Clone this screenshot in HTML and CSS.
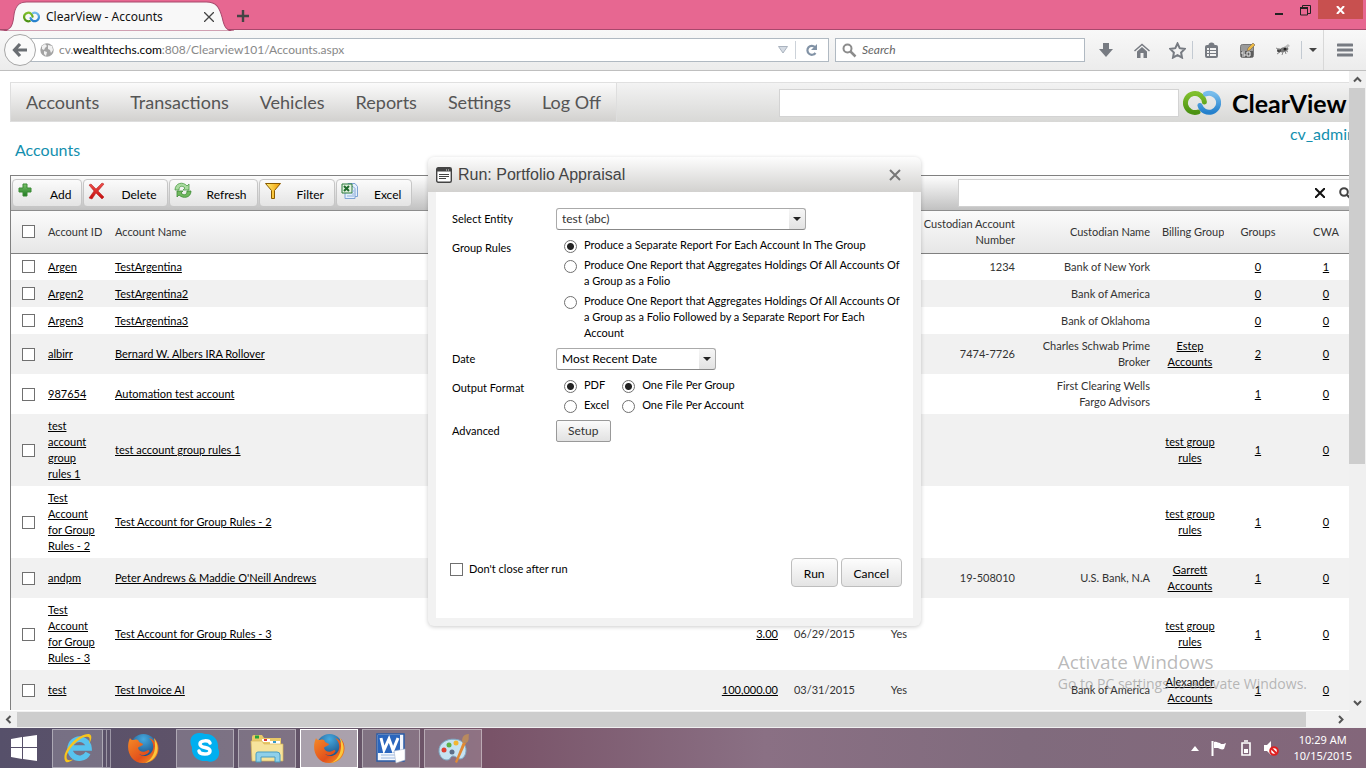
FILE: index.html
```html
<!DOCTYPE html>
<html lang="en">
<head>
  <meta charset="UTF-8">
  <meta name="viewport" content="width=device-width, initial-scale=1.0">
  <title>ClearView - Accounts</title>
  <link rel="stylesheet" href="styles.css">
</head>
<body>

  <!-- shared icons -->
  <svg class="defs" aria-hidden="true">
    <defs>
      <linearGradient id="gGreen" x1="0" y1="0" x2="0" y2="1"><stop offset="0" stop-color="#7fbf2c"/><stop offset="1" stop-color="#4b9112"/></linearGradient>
      <linearGradient id="gBlue" x1="0" y1="0" x2="0" y2="1"><stop offset="0" stop-color="#78bdec"/><stop offset="1" stop-color="#2480cc"/></linearGradient>
      <linearGradient id="gFox" x1="0" y1="0" x2="1" y2="1"><stop offset="0" stop-color="#f58a26"/><stop offset=".6" stop-color="#e2501c"/><stop offset="1" stop-color="#f7a323"/></linearGradient>
      <radialGradient id="gGlobe" cx=".5" cy=".2" r=".8"><stop offset="0" stop-color="#45a9df"/><stop offset="1" stop-color="#143f76"/></radialGradient>
      <linearGradient id="gFunnel"><stop offset="0" stop-color="#fff27a"/><stop offset="1" stop-color="#f39a00"/></linearGradient>
      <linearGradient id="gPlus" x1="0" y1="0" x2="0" y2="1"><stop offset="0" stop-color="#7cc46c"/><stop offset="1" stop-color="#1f7a22"/></linearGradient>
      <linearGradient id="gCross" x1="0" y1="0" x2="0" y2="1"><stop offset="0" stop-color="#f0504c"/><stop offset="1" stop-color="#c40d0d"/></linearGradient>
      <symbol id="logo" viewBox="0 0 38 26">
        <path d="M15 22a9.500 9.500 0 1 1 6.400-10" fill="none" stroke="url(#gGreen)" stroke-width="5" stroke-linecap="round"/>
        <path d="M22.500 4a9.500 9.500 0 1 1-5.500 11.500" fill="none" stroke="url(#gBlue)" stroke-width="5" stroke-linecap="round"/>
      </symbol>
      <symbol id="firefox" viewBox="0 0 32 32">
        <circle cx="16.500" cy="15" r="13" fill="url(#gGlobe)"/>
        <path d="M3 6c1 2 2 2 4 2 3-1 5 0 5 2l4 2c0 2-4 2-5 4 1 4 6 5 10 2 1 0 2 1 1 2-3 4-8 4-11 1 4 5 13 4 15-4 1-5-1-8-4-11 4 1 6 4 7 7 0-2 0-4-2-7 8 6 6 25-11 25C3 31-2 17 3 6z" fill="url(#gFox)"/>
        <path d="M27 6c8 10 2 23-9 25 8-4 12-13 9-25z" fill="#fbc83c"/>
      </symbol>
    </defs>
  </svg>

  <div class="screen">

    <!-- window title bar -->
    <header class="titlebar">
      <div class="tab">
        <svg class="tab-shape" viewBox="0 0 238 30" preserveAspectRatio="none"><path d="M0 30C11 30 13 25 14 16 15 6 19 2 27 2H210C220 2 223 7 226 17 228 26 230 30 238 30Z" fill="#f8f8f8" stroke="#a8486c"/></svg>
        <svg class="tab-logo"><use href="#logo"/></svg>
        <span class="tab-title">ClearView - Accounts</span>
        <button class="tab-close" aria-label="Close tab"><svg width="10" height="10"><path d="M0 0l10 10M10 0L0 10" stroke="#444" stroke-width="1.300"/></svg></button>
      </div>
      <button class="tab-new" aria-label="New tab"><svg width="12" height="12"><path d="M6 0v12M0 6h12" stroke="#444" stroke-width="2.400"/></svg></button>
      <div class="win-buttons">
        <button class="win-btn" aria-label="Minimize"><svg width="10" height="12"><path d="M1 10h8" stroke="#222" stroke-width="2"/></svg></button>
        <button class="win-btn" aria-label="Restore"><svg width="11" height="12"><path d="M.5 4h7v7h-7zM2.500 3V1.500h8v8H8" fill="none" stroke="#222"/><path d="M0 4h8" stroke="#222" stroke-width="2"/></svg></button>
        <button class="win-btn win-close" aria-label="Close"><svg width="9" height="8"><path d="M1 0l7 8M8 0L1 8" stroke="#fff" stroke-width="2"/></svg></button>
      </div>
    </header>

    <!-- browser toolbar -->
    <div class="browser-bar">
      <button class="back" aria-label="Back"><svg width="16" height="16"><path d="M8 2L2.500 8 8 14M3 8h12" fill="none" stroke="#6a6e73" stroke-width="3.200"/></svg></button>
      <div class="url">
        <svg width="14" height="14" viewBox="0 0 14 14"><circle cx="7" cy="7" r="6.700" fill="#a3a3a3"/><path d="M2 3l3-2 2 2-2 2-1 2-2-1zM8 2l4 1 1 4-2 3-1-3-2-1zM4 8l3 1-1 4-2-2z" fill="#f1f1f1"/></svg>
        <span class="url-text">cv.<b>wealthtechs.com</b>:808/Clearview101/Accounts.aspx</span>
        <svg width="10" height="8"><path d="M.5 .5h9L5 7z" fill="#d5dbe3" stroke="#aab3bf"/></svg>
        <button class="reload" aria-label="Reload"><svg width="14" height="14"><path d="M10.500 10A4.500 4.500 0 1 1 10 4" fill="none" stroke="#8293a6" stroke-width="2.200"/><path d="M12 1v6H6z" fill="#8293a6"/></svg></button>
      </div>
      <div class="search">
        <svg width="15" height="15"><circle cx="5.500" cy="5.500" r="4" fill="none" stroke="#8c8c8c" stroke-width="2"/><path d="M8.500 8.500l5 5" stroke="#8c8c8c" stroke-width="2.500"/></svg>
        <input type="text" placeholder="Search" aria-label="Search the web">
      </div>
      <div class="tools">
        <button class="tool" aria-label="Downloads"><svg width="16" height="18"><path d="M5 2h6v6h4l-7 8-7-8h4z" fill="#777b82"/></svg></button>
        <button class="tool" aria-label="Home"><svg width="18" height="17"><path d="M1.500 9L9 2.500 16.500 9" fill="none" stroke="#777b82" stroke-width="1.500"/><path d="M4 9.500L9 5l5 4.500V16h-3.500v-5h-3v5H4z" fill="#777b82"/></svg></button>
        <button class="tool tool-sep" aria-label="Bookmark"><svg width="17" height="17"><path d="M8.500 1.500l2.200 4.700 5 .7-3.600 3.600.9 5.100-4.500-2.400L4 15.600l.9-5.100L1.300 6.900l5-.7z" fill="none" stroke="#777b82" stroke-width="2"/></svg></button>
        <button class="tool" aria-label="Bookmarks list"><svg width="15" height="17"><rect x="1" y="3" width="13" height="13" rx="2" fill="#777b82"/><path d="M4.500 3q0-2.500 3-2.500t3 2.500z" fill="#777b82"/><path d="M3 6h2v2H3zM6 6h6v2H6zM3 9h2v2H3zM6 9h6v2H6zM3 12h2v2H3zM6 12h6v2H6z" fill="#f2f2f2"/></svg></button>
        <button class="tool" aria-label="SQL add-on"><svg width="17" height="17"><rect x="1.500" y="2.500" width="13" height="13" rx="2" fill="#9a9a9a" stroke="#777"/><path d="M2 9h12v6H2z" fill="#5c5c5c"/><path d="M6 10H3v2h3v2H3M8 10h3v4H8z" fill="none" stroke="#eee"/><path d="M8 9l1-3 5-5 2 2-5 5z" fill="#edbb46" stroke="#765" stroke-width=".6"/></svg></button>
        <button class="tool" aria-label="Firebug"><svg width="16" height="14"><ellipse cx="9" cy="6.500" rx="4.500" ry="2.500" transform="rotate(-20 9 6.500)" fill="#777"/><circle cx="4" cy="7.500" r="2" fill="#444"/><path d="M1 5l4 2M2 11l3-2M7 12l1-3M11 11l-1-3M13 9l-3-2" stroke="#888"/><path d="M8 5l5-4 2 2-5 3z" fill="#bbb"/><circle cx="10" cy="6" r="1.500" fill="#222"/></svg></button>
        <button class="tool tool-drop" aria-label="More"><svg width="8" height="4"><path d="M0 0h8L4 4z" fill="#444"/></svg></button>
        <button class="tool tool-menu" aria-label="Menu"><svg width="16" height="14"><path d="M1 2h14M1 7h14M1 12h14" stroke="#777b82" stroke-width="3" stroke-linecap="round"/></svg></button>
      </div>
    </div>

    <!-- web page -->
    <div class="viewport">
      <div class="page">
        <div class="content">

          <div class="site-head">
            <nav class="menu">
              <a href="#">Accounts</a>
              <a href="#">Transactions</a>
              <a href="#">Vehicles</a>
              <a href="#">Reports</a>
              <a href="#">Settings</a>
              <a href="#">Log Off</a>
            </nav>
            <div class="brand">
              <input class="site-search" type="text" aria-label="Search site">
              <svg class="brand-logo"><use href="#logo"/></svg>
              <span class="brand-name">ClearView</span>
            </div>
          </div>
          <div class="user"><a href="#">cv_admin</a></div>
          <h1>Accounts</h1>

          <div class="grid">
            <div class="grid-bar">
              <button class="gbtn"><svg width="18" height="18"><path d="M6 2h4v4h4v4h-4v4H6v-4H2V6h4z" fill="url(#gPlus)" stroke="#3b8a35"/></svg>Add</button>
              <button class="gbtn"><svg width="18" height="18"><path d="M1 3l2-1 5 5 6-6 2 1-6 7 6 6-2 2-6-6-4 6-3-1 5-7z" fill="url(#gCross)" stroke="#b01515" stroke-width=".5"/></svg>Delete</button>
              <button class="gbtn"><svg width="18" height="18"><path d="M1 8C1 1 9-1 13 4l2-2v6H9l2-2C8 3 5 4 5 8z" fill="#a9dba0" stroke="#4d9a45" stroke-width=".8"/><path d="M17 9c0 7-8 8-12 4l-2 2V9h6l-2 2c3 3 6 2 6-2z" fill="#6fb85e" stroke="#3e8c35" stroke-width=".8"/></svg>Refresh</button>
              <button class="gbtn"><svg width="18" height="18"><path d="M1.500 1.500h15l-6 7v8h-3v-8z" fill="url(#gFunnel)" stroke="#8a5a00"/></svg>Filter</button>
              <button class="gbtn"><svg width="18" height="18"><path d="M7 1.500h7l2.500 3v10H7z" fill="#e4effc" stroke="#7fa3d4"/><path d="M4 4.500h8l2 2v10H4z" fill="#e4effc" stroke="#7fa3d4"/><path d="M1 2h10v9H1z" fill="#e4f2e2" stroke="#2b7a3a"/><path d="M3 4l5 5M8 4L3 9" stroke="#1e6b2c" stroke-width="2"/><path d="M11 9h2m-2 3h2m-7 2h7" stroke="#8fb0dc"/></svg>Excel</button>
              <div class="grid-search">
                <input type="text" aria-label="Search accounts">
                <button aria-label="Clear"><svg width="10" height="10"><path d="M0 0l10 10M10 0L0 10" stroke="#111" stroke-width="2"/></svg></button>
                <button aria-label="Find"><svg width="13" height="13"><circle cx="5" cy="5" r="3.800" fill="none" stroke="#444" stroke-width="2"/><path d="M8 8l4 4" stroke="#444" stroke-width="2"/></svg></button>
              </div>
            </div>

            <table class="accounts">
              <colgroup>
                <col class="c-check"><col class="c-id"><col class="c-name"><col class="c-value"><col class="c-date"><col class="c-active">
                <col class="c-custno"><col class="c-cust"><col class="c-count"><col class="c-count"><col class="c-count">
              </colgroup>
              <thead>
                <tr>
                  <th class="check"><input type="checkbox" aria-label="Select all"></th>
                  <th class="left">Account ID</th>
                  <th class="left">Account Name</th>
                  <th></th><th></th><th></th>
                  <th class="right">Custodian Account Number</th>
                  <th class="right">Custodian Name</th>
                  <th class="clip">Billing Group</th>
                  <th>Groups</th>
                  <th>CWA</th>
                </tr>
              </thead>
              <tbody>
                <tr>
                  <td class="check"><input type="checkbox" aria-label="Argen"></td>
                  <td class="left"><a href="#">Argen</a></td>
                  <td class="left"><a href="#">TestArgentina</a></td>
                  <td></td><td></td><td></td>
                  <td class="right">1234</td>
                  <td class="right">Bank of New York</td>
                  <td></td>
                  <td><a href="#">0</a></td>
                  <td><a href="#">1</a></td>
                </tr>
                <tr>
                  <td class="check"><input type="checkbox" aria-label="Argen2"></td>
                  <td class="left"><a href="#">Argen2</a></td>
                  <td class="left"><a href="#">TestArgentina2</a></td>
                  <td></td><td></td><td></td>
                  <td></td>
                  <td class="right">Bank of America</td>
                  <td></td>
                  <td><a href="#">0</a></td>
                  <td><a href="#">0</a></td>
                </tr>
                <tr>
                  <td class="check"><input type="checkbox" aria-label="Argen3"></td>
                  <td class="left"><a href="#">Argen3</a></td>
                  <td class="left"><a href="#">TestArgentina3</a></td>
                  <td></td><td></td><td></td>
                  <td></td>
                  <td class="right">Bank of Oklahoma</td>
                  <td></td>
                  <td><a href="#">0</a></td>
                  <td><a href="#">0</a></td>
                </tr>
                <tr>
                  <td class="check"><input type="checkbox" aria-label="albirr"></td>
                  <td class="left"><a href="#">albirr</a></td>
                  <td class="left"><a href="#">Bernard W. Albers IRA Rollover</a></td>
                  <td></td><td></td><td></td>
                  <td class="right">7474-7726</td>
                  <td class="right">Charles Schwab Prime Broker</td>
                  <td><a href="#">Estep Accounts</a></td>
                  <td><a href="#">2</a></td>
                  <td><a href="#">0</a></td>
                </tr>
                <tr>
                  <td class="check"><input type="checkbox" aria-label="987654"></td>
                  <td class="left"><a href="#">987654</a></td>
                  <td class="left"><a href="#">Automation test account</a></td>
                  <td></td><td></td><td></td>
                  <td></td>
                  <td class="right">First Clearing Wells Fargo Advisors</td>
                  <td></td>
                  <td><a href="#">1</a></td>
                  <td><a href="#">0</a></td>
                </tr>
                <tr>
                  <td class="check"><input type="checkbox" aria-label="test account group rules 1"></td>
                  <td class="left"><a href="#">test account group rules 1</a></td>
                  <td class="left"><a href="#">test account group rules 1</a></td>
                  <td></td><td></td><td></td>
                  <td></td>
                  <td></td>
                  <td><a href="#">test group rules</a></td>
                  <td><a href="#">1</a></td>
                  <td><a href="#">0</a></td>
                </tr>
                <tr>
                  <td class="check"><input type="checkbox" aria-label="Test Account for Group Rules - 2"></td>
                  <td class="left"><a href="#">Test Account for Group Rules - 2</a></td>
                  <td class="left"><a href="#">Test Account for Group Rules - 2</a></td>
                  <td></td><td></td><td></td>
                  <td></td>
                  <td></td>
                  <td><a href="#">test group rules</a></td>
                  <td><a href="#">1</a></td>
                  <td><a href="#">0</a></td>
                </tr>
                <tr>
                  <td class="check"><input type="checkbox" aria-label="andpm"></td>
                  <td class="left"><a href="#">andpm</a></td>
                  <td class="left"><a href="#">Peter Andrews &amp; Maddie O'Neill Andrews</a></td>
                  <td></td><td></td><td></td>
                  <td class="right">19-508010</td>
                  <td class="right">U.S. Bank, N.A</td>
                  <td><a href="#">Garrett Accounts</a></td>
                  <td><a href="#">1</a></td>
                  <td><a href="#">0</a></td>
                </tr>
                <tr>
                  <td class="check"><input type="checkbox" aria-label="Test Account for Group Rules - 3"></td>
                  <td class="left"><a href="#">Test Account for Group Rules - 3</a></td>
                  <td class="left"><a href="#">Test Account for Group Rules - 3</a></td>
                  <td class="right"><a href="#">3.00</a></td>
                  <td class="right">06/29/2015</td>
                  <td class="right">Yes</td>
                  <td></td>
                  <td></td>
                  <td><a href="#">test group rules</a></td>
                  <td><a href="#">1</a></td>
                  <td><a href="#">0</a></td>
                </tr>
                <tr>
                  <td class="check"><input type="checkbox" aria-label="test"></td>
                  <td class="left"><a href="#">test</a></td>
                  <td class="left"><a href="#">Test Invoice AI</a></td>
                  <td class="right"><a href="#">100,000.00</a></td>
                  <td class="right">03/31/2015</td>
                  <td class="right">Yes</td>
                  <td></td>
                  <td class="right">Bank of America</td>
                  <td><a href="#">Alexander Accounts</a></td>
                  <td><a href="#">1</a></td>
                  <td><a href="#">0</a></td>
                </tr>
              </tbody>
            </table>
          </div>
        </div>

        <!-- report dialog -->
        <div class="overlay">
          <form class="dialog" role="dialog" aria-labelledby="dlgTitle">
            <div class="dialog-head">
              <svg width="16" height="16"><rect x=".7" y=".7" width="14.600" height="14.600" rx="1.500" fill="#fff" stroke="#444" stroke-width="1.400"/><path d="M1 1h14v3.500H1z" fill="#444"/><path d="M10 3h1m1 0h1" stroke="#ddd"/><path d="M3 7.500h10M3 9.500h10M3 11.500h7" stroke="#444"/></svg>
              <h2 id="dlgTitle">Run: Portfolio Appraisal</h2>
              <button type="button" aria-label="Close dialog"><svg width="12" height="12"><path d="M1 1l10 10M11 1L1 11" stroke="#777" stroke-width="2"/></svg></button>
            </div>
            <div class="dialog-body">
              <div class="fields">
                <label for="entity">Select Entity</label>
                <div class="drop drop-wide">
                  <select id="entity"><option>test (abc)</option></select>
                </div>

                <span id="rulesLabel">Group Rules</span>
                <div class="options" role="radiogroup" aria-labelledby="rulesLabel">
                  <label><input type="radio" name="rules" checked><span>Produce a Separate Report For Each Account In The Group</span></label>
                  <label><input type="radio" name="rules"><span>Produce One Report that Aggregates Holdings Of All Accounts Of a Group as a Folio</span></label>
                  <label><input type="radio" name="rules"><span>Produce One Report that Aggregates Holdings Of All Accounts Of a Group as a Folio Followed by a Separate Report For Each Account</span></label>
                </div>

                <label for="date">Date</label>
                <div class="drop drop-date">
                  <select id="date"><option>Most Recent Date</option></select>
                </div>

                <span>Output Format</span>
                <div class="formats">
                  <div class="options">
                    <label><input type="radio" name="format" checked><span>PDF</span></label>
                    <label><input type="radio" name="format"><span>Excel</span></label>
                  </div>
                  <div class="options">
                    <label><input type="radio" name="files" checked><span>One File Per Group</span></label>
                    <label><input type="radio" name="files"><span>One File Per Account</span></label>
                  </div>
                </div>

                <span>Advanced</span>
                <button type="button" class="setup">Setup</button>
              </div>
              <div class="dialog-foot">
                <label class="keep"><input type="checkbox">Don't close after run</label>
                <button type="button" class="action">Run</button>
                <button type="button" class="action">Cancel</button>
              </div>
            </div>
          </form>
        </div>
      </div>

      <!-- scrollbars -->
      <div class="vscroll">
        <svg class="arrow"><path d="M5 10.500l3.500-3.500 3.500 3.500" fill="none" stroke="#555" stroke-width="2"/></svg>
        <div class="track"><div class="thumb"></div></div>
        <svg class="arrow"><path d="M5 7l3.500 3.500L12 7" fill="none" stroke="#555" stroke-width="2"/></svg>
      </div>
      <div class="hscroll">
        <svg class="arrow"><path d="M10.500 5L7 8.500l3.500 3.500" fill="none" stroke="#555" stroke-width="2"/></svg>
        <div class="track"><div class="thumb"></div></div>
        <svg class="arrow"><path d="M7 5l3.500 3.500L7 12" fill="none" stroke="#555" stroke-width="2"/></svg>
      </div>
    </div>

    <!-- taskbar -->
    <footer class="taskbar">
      <button class="start" aria-label="Start"><svg width="28" height="28"><path d="M1 5l11-2v10H1zM13 3l14-2v12H13zM1 14h11v11L1 23zM13 14h14v13l-14-2z" fill="#fff"/></svg></button>
      <div class="stack">
        <button class="task" aria-label="Internet Explorer"><svg width="32" height="32"><path d="M26 21a9.500 9.500 0 1 1 1-5H9" fill="none" stroke="#58c3ee" stroke-width="5.500"/><path d="M4 30C-3 22 15 1 27 2c4 1 2 7 0 10 1-4 1-7-1-7C18 3 2 21 5 27c1 2 5 1 7 0-3 2-6 4-8 3z" fill="#f8c51c"/></svg></button>
        <i></i>
        <i></i>
      </div>
      <button class="task task-plain" aria-label="Firefox"><svg width="32" height="32"><use href="#firefox"/></svg></button>
      <button class="task" aria-label="Skype"><svg width="32" height="32"><path d="M10 1a13 13 0 0 1 6 1c8-1 14 6 13 14 4 8-3 16-11 13C9 30 2 24 3 15-1 8 3 1 10 1z" fill="#00aff0"/><path d="M21 11c-1-3-10-3-10 1 0 5 10 2 10 7 0 4-10 4-11 0" fill="none" stroke="#fff" stroke-width="3.500" stroke-linecap="round"/></svg></button>
      <button class="task" aria-label="File Explorer"><svg width="34" height="32"><path d="M2 5q0-2 2-2h8l2 3h17v23H2z" fill="#e9c968"/><path d="M5 5h4" stroke="#24a33a" stroke-width="3"/><path d="M12 7h8v3h-8zM20 9h10v3H20z" fill="#fff"/><path d="M14 8h3" stroke="#d33" stroke-width="2"/><path d="M23 10h3" stroke="#39c" stroke-width="2"/><path d="M1 9h11l2 3h19v17H2z" fill="#f6e39c" stroke="#d8b65a" stroke-width=".7"/><path d="M6 30V22q0-2 2-2h19q3 0 3 3v7h-5v-5H11v5z" fill="#8fd0ea" stroke="#4b9cc0"/></svg></button>
      <button class="task task-active" aria-label="Firefox window"><svg width="32" height="32"><use href="#firefox"/></svg></button>
      <button class="task" aria-label="Word"><svg width="32" height="32"><path d="M2 2h27v27H2z" fill="#f3f7fd" stroke="#2a5ca8" stroke-width="1.500"/><path d="M3 3h22v18H3z" fill="#2b66bd"/><path d="M6 6l3 12 5-11 4 11 5-12" fill="none" stroke="#fff" stroke-width="3"/><path d="M6 23h14M6 26h14" stroke="#9db8de"/><path d="M19 19l11-2v11l-9 3z" fill="#fff" stroke="#a8b6cc" stroke-width=".6"/></svg></button>
      <button class="task" aria-label="Paint"><svg width="32" height="32"><path d="M2 20C1 10 12 5 22 8c8 3 9 13 4 18-5 3-6-2-10-2-3 0-2 4-6 4-4 0-7-3-8-8z" fill="#c6e3f2" stroke="#7ea9c4"/><circle cx="7" cy="18" r="2.500" fill="#dd4133"/><circle cx="12" cy="13" r="2.500" fill="#5cb047"/><circle cx="19" cy="11" r="2.500" fill="#f2b632"/><circle cx="15" cy="20" r="2.500" fill="#5c6f88"/><path d="M18 30l8-20 3 1-9 20z" fill="#e08a35"/><path d="M25 10c0-4 1-8 7-8-1 3 1 7-3 9z" fill="#b98a5e"/></svg></button>
      <div class="tray">
        <svg width="8" height="5"><path d="M4 0l4 5H0z" fill="#fff"/></svg>
        <svg class="flag" width="16" height="16"><path d="M1.500 1v15" stroke="#fff" stroke-width="2"/><path d="M3 2c3-1 4 1 6 1l1 1c2 0 3 0 5-1l-2 6c-2 1-4 0-6-1H3z" fill="#fff"/></svg>
        <svg width="10" height="16"><path d="M1 3h8v12H1zM3 1h4" fill="none" stroke="#fff" stroke-width="1.600"/><path d="M3 9h4v4H3z" fill="#fff"/></svg>
        <svg width="16" height="16"><path d="M1 5h3l4-4v14l-4-4H1z" fill="#fff"/><circle cx="11" cy="11" r="3.800" fill="#fff" stroke="#e02020" stroke-width="2"/><path d="M8.500 8.500l5 5" stroke="#e02020" stroke-width="2"/></svg>
        <div class="clock"><span>10:29 AM</span><span>10/15/2015</span></div>
      </div>
    </footer>

    <div class="watermark">
      <p class="wm-title">Activate Windows</p>
      <p class="wm-text">Go to PC settings to activate Windows.</p>
    </div>
  </div>

</body>
</html>
```
FILE: styles.css
```css
* { box-sizing: border-box; }
body {
  margin: 0;
  font-family: Lato, "Liberation Sans", sans-serif;
  font-size: 11px;
  line-height: 16px;
  color: #333;
}
button {
  font: inherit;
  color: inherit;
  padding: 0;
  border: none;
  background: none;
}
input, select { font: inherit; margin: 0; }
svg { display: block; flex: none; }
.defs { position: absolute; width: 0; height: 0; }

.screen {
  display: flex;
  flex-direction: column;
  height: 100vh;
  overflow: hidden;
}

/* Title bar */
.titlebar {
  display: flex;
  height: 30px;
  flex: none;
  background: #e76791;
  border-bottom: 1px solid #a8486c;
}
.tab {
  position: relative;
  display: flex;
  align-items: center;
  width: 234px;
  height: 31px;
  padding: 2px 20px 0 23px;
  font: 12px "Noto Sans", "Open Sans", sans-serif;
  color: #111;
}
.tab > * { position: relative; }
.tab .tab-shape {
  position: absolute;
  left: 0;
  top: 0;
  width: 100%;
  height: 100%;
}
.tab-logo { width: 17px; height: 12px; }
.tab-title { flex: 1; padding-left: 6px; white-space: nowrap; }
.tab-new { padding: 2px 3px 0; }
.win-buttons { display: flex; margin-left: auto; padding-right: 3px; }
.win-btn {
  display: flex;
  align-items: center;
  justify-content: center;
  width: 26px;
  height: 19px;
}
.win-close { width: 45px; background: #c8504f; }

/* Browser toolbar */
.browser-bar {
  display: flex;
  align-items: center;
  height: 41px;
  flex: none;
  padding-left: 4px;
  background: linear-gradient(#f8f8f8, #ececec);
  border-bottom: 1px solid #bfbfbf;
  font-size: 12px;
}
.back {
  display: flex;
  align-items: center;
  justify-content: center;
  width: 32px;
  height: 32px;
  border: 1px solid #a6a6a6;
  border-radius: 50%;
  background: #fafafa;
  z-index: 1;
}
.url, .search {
  display: flex;
  align-items: center;
  height: 24px;
  background: #fff;
  border: 1px solid #b0b9c2;
}
.url {
  flex: 1;
  margin: 0 6px 0 -8px;
  padding-left: 11px;
  gap: 5px;
  color: #888;
}
.url-text { flex: 1; white-space: nowrap; }
.url-text b { font-weight: normal; color: #000; }
.reload {
  display: flex;
  align-items: center;
  height: 18px;
  padding: 0 9px;
  margin-left: 2px;
  border-left: 1px solid #ccd2d9;
}
.search { width: 250px; padding: 0 6px; gap: 5px; }
.search input {
  flex: 1;
  min-width: 0;
  border: none;
  padding: 0;
  font-style: italic;
}
.search input::placeholder { color: #666; }
.tools { display: flex; align-items: center; padding-left: 3px; }
.tool {
  display: flex;
  align-items: center;
  justify-content: center;
  width: 36px;
  height: 18px;
}
.tool-sep { width: 33px; padding-left: 3px; border-right: 1px solid #c3cad2; }
.tool-drop { width: 22px; border-left: 1px solid #c3cad2; }
.tool-menu { width: 43px; height: 40px; border-left: 1px solid #d8d8d8; }

/* Browser viewport and scrollbars */
.viewport {
  flex: 1;
  min-height: 0;
  display: grid;
  grid-template-columns: 1fr 17px;
  grid-template-rows: 1fr 17px;
  background: #f0f0f0;
}
.page {
  position: relative;
  overflow: hidden;
  min-width: 0;
  min-height: 0;
  background: #fff;
}
.vscroll { display: flex; flex-direction: column; }
.hscroll { display: flex; grid-column: 1 / 3; padding-right: 17px; }
.arrow { width: 17px; height: 17px; }
.track { flex: 1; }
.thumb { background: #cdcdcd; }
.vscroll .thumb { height: 62%; margin-right: 1px; }
.hscroll .thumb { width: 98%; height: 15px; margin-top: 1px; }

/* Site header */
.content {
  width: 102%;
  padding: 11px 15px 0 10px;
}
.site-head {
  display: flex;
  align-items: center;
  height: 40px;
  background: linear-gradient(#f3f3f3, #d8d8d6);
  border-top: 1px solid #e0e0e0;
}
.menu {
  display: flex;
  align-items: center;
  align-self: stretch;
  gap: 31px;
  padding: 0 15px;
  background: linear-gradient(#fbfbfb, #d2d1cf);
  border: 1px solid #dedede;
  border-top: none;
  font-size: 18px;
}
.menu a { color: #555; text-decoration: none; white-space: nowrap; }
.brand { display: flex; align-items: center; margin-left: auto; }
.site-search {
  width: 400px;
  height: 28px;
  border: 1px solid #d3d3d3;
}
.brand-logo { width: 38px; height: 26px; margin: 0 11px 0 4px; }
.brand-name {
  width: 129px;
  font: bold 25px Lato, sans-serif;
  color: #000;
}
.user {
  padding: 3px 5px 0 0;
  text-align: right;
  font-size: 16px;
  line-height: 18px;
}
.user a, h1 { color: #138fae; text-decoration: none; }
h1 {
  margin: 0 0 18px 5px;
  font-size: 16px;
  font-weight: normal;
  line-height: 14px;
}

/* Accounts grid */
.grid { border: 1px solid #808080; border-bottom: none; }
.grid-bar {
  display: flex;
  align-items: center;
  gap: 1px;
  height: 35px;
  padding-left: 1px;
  background: linear-gradient(#fdfdfd, #c1c1c1);
  border-bottom: 1px solid #8d8d8d;
}
.gbtn {
  display: flex;
  align-items: center;
  gap: 15px;
  height: 28px;
  padding: 3px 10px 0 4px;
  background: linear-gradient(#fbfbfb, #e4e4e4);
  border: 1px solid #c6c6c6;
  border-radius: 4px;
  font-size: 12px;
  color: #000;
}
.gbtn svg { margin-top: -8px; }
.grid-search {
  display: flex;
  align-items: center;
  width: 402px;
  height: 28px;
  margin-left: auto;
  padding-right: 7px;
  gap: 14px;
  background: #fff;
  border: 1px solid #d0d0d0;
}
.grid-search input { flex: 1; min-width: 0; border: none; }
.accounts {
  width: 100%;
  table-layout: fixed;
  border-collapse: collapse;
}
.c-check { width: 31px; }
.c-id { width: 67px; }
.c-value { width: 84px; }
.c-date { width: 75px; }
.c-active { width: 54px; }
.c-custno { width: 108px; }
.c-cust { width: 135px; }
.c-count { width: 68px; }
th, td {
  height: 27px;
  padding: 4px 6px;
  text-align: center;
  font-weight: normal;
}
th { height: 42px; }
thead tr { background: linear-gradient(#fbfbfb, #e6e6e6); }
thead { border-bottom: 1px solid #808080; }
tbody tr:nth-child(even) { background: #f1f1f1; }
td a { color: #000; }
.check { padding: 4px 0 4px 11px; }
.left { text-align: left; }
td.left { padding-right: 10px; }
.right { text-align: right; }
td.right { padding-left: 10px; }
.clip { overflow: hidden; white-space: nowrap; }
th.clip { padding-right: 0; }
input[type="checkbox"], input[type="radio"] {
  appearance: none;
  display: block;
  flex: none;
  width: 13px;
  height: 13px;
  background: #fff;
  border: 1px solid #707070;
}
input[type="radio"] { border-radius: 50%; }
input[type="radio"]:checked { background: radial-gradient(circle, #222 0 3px, #fff 4px); }

/* Dialog */
.overlay {
  position: absolute;
  inset: 0;
  display: flex;
  align-items: center;
  justify-content: center;
}
.dialog {
  width: 493px;
  padding: 0 8px 8px;
  background: #f2f2f2;
  border-radius: 6px;
  box-shadow: 0 1px 4px rgba(0,0,0,0.2);
  color: #000;
}
.dialog-head {
  display: flex;
  align-items: center;
  gap: 6px;
  height: 35px;
  margin: 0 -8px;
  padding: 2px 20px 0 8px;
  border-radius: 6px 6px 0 0;
  background: linear-gradient(#fdfdfd, #d2d1cf);
}
.dialog-head h2 {
  flex: 1;
  margin: 0;
  font: 16px "Liberation Sans", Arial, sans-serif;
  color: #444;
}
.dialog-body {
  min-height: 426px;
  padding: 16px 11px 31px 16px;
  background: #fff;
  display: flex;
  flex-direction: column;
}
.fields {
  display: grid;
  grid-template-columns: 104px 1fr;
  gap: 7px 0;
}
.fields > span, .fields > label { line-height: 22px; }
.drop { position: relative; height: 22px; }
.drop-wide { width: 250px; }
.drop-date { width: 160px; }
.drop select {
  appearance: none;
  width: 100%;
  height: 22px;
  padding: 1px 20px 0 5px;
  border: 1px solid #aaa;
  border-bottom-color: #888;
  border-radius: 3px;
  background: linear-gradient(#f6f6f6, #e2e2e2) right / 16px 100% no-repeat #fff;
  font-size: 12px;
  color: #000;
}
.drop-wide select { color: #333; }
.drop::after {
  content: "";
  position: absolute;
  right: 5px;
  top: 9px;
  border: 4px solid transparent;
  border-top-color: #222;
  border-bottom: none;
}
.options {
  display: flex;
  flex-direction: column;
  gap: 4px;
  padding-left: 8px;
}
.options label { display: flex; gap: 7px; }
.options input { margin-top: 3px; }
.formats { display: flex; gap: 5px; }
.setup {
  justify-self: start;
  height: 22px;
  padding: 1px 11px 0;
  border: 1px solid #999;
  border-radius: 2px;
  background: linear-gradient(#fbfbfb, #e2e2e2);
  font-size: 12px;
  color: #333;
}
.dialog-foot {
  display: flex;
  align-items: center;
  gap: 3px;
  margin-top: auto;
}
.keep {
  display: flex;
  align-items: center;
  gap: 6px;
  margin: -6px auto 0 -2px;
}
.action {
  height: 29px;
  padding: 3px 12px 0;
  border: 1px solid #bdbdbd;
  border-radius: 4px;
  background: linear-gradient(#fdfdfd, #e4e4e4);
  font-size: 12px;
}

/* Taskbar */
.taskbar {
  display: flex;
  align-items: center;
  height: 40px;
  flex: none;
  gap: 4px;
  padding-right: 14px;
  background: linear-gradient(90deg, #56506a, #675568 28%, #795368 36%, #8a7084 56%, #806b7d 75%, #83667a);
}
.start { display: flex; justify-content: center; width: 48px; }
.task {
  display: flex;
  align-items: center;
  justify-content: center;
  width: 58px;
  height: 39px;
  background: rgba(255,255,255,0.18);
  border: 1px solid rgba(255,255,255,0.4);
}
.task-plain { background: none; border-color: transparent; }
.task-active { background: rgba(255,255,255,0.45); border-color: #fff; }
.stack { display: flex; margin-right: -1px; }
.stack .task { width: 51px; }
.stack i {
  width: 4px;
  border: 1px solid rgba(255,255,255,0.4);
  border-left: none;
}
.tray {
  display: flex;
  align-items: center;
  gap: 12px;
  margin-left: auto;
}
.flag { margin-right: 2px; }
.clock {
  display: flex;
  flex-direction: column;
  padding-left: 2px;
  text-align: center;
  font-family: "Noto Sans", "Open Sans", sans-serif;
  font-size: 11px;
  color: #fff;
}

.watermark {
  position: absolute;
  right: 59px;
  bottom: 74px;
  font-family: "Open Sans", sans-serif;
  color: rgba(140,140,140,0.6);
  pointer-events: none;
}
.watermark p { margin: 0; }
.wm-title { font-size: 19px; line-height: 24px; }
.wm-text { font-size: 14px; line-height: 20px; }
```
